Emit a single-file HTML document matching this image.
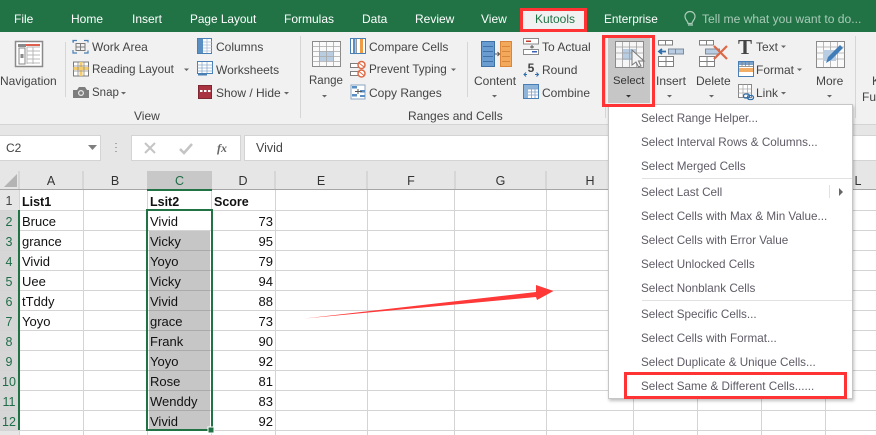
<!DOCTYPE html>
<html><head><meta charset="utf-8"><style>
html,body{margin:0;padding:0;background:#fff}
#p{position:relative;width:876px;height:435px;overflow:hidden;font-family:"Liberation Sans",sans-serif;background:#fff}
.b{position:absolute}
.t{position:absolute;white-space:nowrap;font-size:12px;line-height:16px;height:16px;color:#444}
.w{color:#fff;top:11px}
.m{color:#5f5b66;left:641px;font-size:11.7px}
.k{color:#111;font-size:13px}
.kb{font-weight:bold;color:#111;font-size:12.5px}
.n{text-align:right;width:40px;left:233px;color:#111;font-size:13px}
.r{left:0;width:18px;text-align:center;color:#1f6d48;font-size:12.5px}
.h{top:173px;color:#333;text-align:center;font-size:12.5px}
svg{position:absolute;left:0;top:0}
</style></head><body><div id="p">
<div class="b" style="left:0;top:0;width:876px;height:32px;background:#217346"></div>
<div class="b" style="left:0;top:32px;width:876px;height:92px;background:#f1f1f1"></div>
<div class="b" style="left:0;top:124px;width:876px;height:1px;background:#d4d4d4"></div>
<div class="b" style="left:0;top:125px;width:876px;height:46px;background:#e6e6e6"></div>
<div class="b" style="left:0;top:135px;width:100px;height:24px;background:#fff;border:1px solid #d4d4d4;border-left:0"></div>
<div class="b" style="left:131px;top:135px;width:108px;height:24px;background:#fff;border:1px solid #d4d4d4"></div>
<div class="b" style="left:244px;top:135px;width:640px;height:24px;background:#fff;border:1px solid #d4d4d4"></div>

<svg width="876" height="435" viewBox="0 0 876 435">
<rect x="0" y="171" width="876" height="19" fill="#e6e6e6"/>
<rect x="0" y="190" width="19" height="245" fill="#e6e6e6"/>
<rect x="0" y="210" width="19" height="220" fill="#d6d6d6"/>
<rect x="147" y="171" width="65" height="19" fill="#c8c8c8"/>
<path d="M19 171V190M83 171V190M211 171V190M275 171V190M367 171V190M455 171V190M546 171V190M634 171V190" stroke="#c6c6c6"/>
<path d="M0 189.5H876" stroke="#a6a6a6"/>
<path d="M4 187 L17 174 V187Z" fill="#b4b4b4"/>
<g stroke="#d4d4d4" fill="none">
<path d="M19.5 190V435M83.5 190V435M147.5 190V435M211.5 190V435M275.5 190V435M367.5 190V435M454.5 190V435M546.5 190V435M633.5 190V435M697.5 190V435M761.5 190V435M825.5 190V435"/>
<path d="M0 210.5H876M0 230.5H876M0 250.5H876M0 270.5H876M0 290.5H876M0 310.5H876M0 330.5H876M0 350.5H876M0 370.5H876M0 390.5H876M0 410.5H876M0 430.5H876"/>
</g>
<rect x="149" y="231" width="61" height="198" fill="#c6c6c6"/>
<path d="M149 250.5H210M149 270.5H210M149 290.5H210M149 310.5H210M149 330.5H210M149 350.5H210M149 370.5H210M149 390.5H210M149 410.5H210" stroke="#ababab"/>
<rect x="147" y="210" width="65" height="220" fill="none" stroke="#217346" stroke-width="2"/>
<rect x="18" y="210" width="2" height="220" fill="#217346"/>
<rect x="147" y="189" width="65" height="2" fill="#217346"/>
<rect x="208" y="427" width="6" height="6" fill="#217346" stroke="#fff"/>
<!-- arrow -->
<path d="M304.5 318.500 L536 292 L536 285 L553.500 291 L537 300 L536 297Z" fill="#ff3838"/>
<!-- formula bar icons -->
<path d="M88 145h9l-4.500 5z" fill="#7f7f7f"/>
<path d="M116 143v1M116 147v1M116 151v1" stroke="#a8a8a8" stroke-width="2"/>
<path d="M145 143l10 10M155 143l-10 10" stroke="#c4c4c4" stroke-width="2"/>
<path d="M180 149l4 4 8-9" stroke="#c4c4c4" stroke-width="2.500" fill="none"/>
<!-- Ribbon separators -->
<path d="M65.500 42V97M300.500 36V118M467.500 42V97M605.500 36V118M855.500 36V118" stroke="#d6d6d6"/>
<!-- Navigation -->
<rect x="15.500" y="41.500" width="27" height="25" fill="#fff" stroke="#8a8a8a" stroke-width="1.500"/>
<rect x="18" y="44" width="8" height="3" fill="#8a8a8a"/>
<rect x="26" y="44" width="14" height="2" fill="#e06050"/>
<path d="M27 47H40M27 51H40M27 55H40M27 59H40M27 63H40M33 47V64M27 47V64" stroke="#b8b8b8"/>
<rect x="19" y="48" width="6" height="16" fill="#fff" stroke="#8a8a8a"/>
<rect x="20.500" y="54" width="3" height="4" fill="#8a8a8a"/>
<!-- Work area -->
<path d="M74 42h-1v-1.500h4M84 40.500h4v2M73 50v3h4M84 53h4v-2.500" stroke="#4a7fb5" fill="none" stroke-width="1.200"/>
<rect x="76" y="43.500" width="9" height="7" fill="none" stroke="#7a7a7a"/>
<path d="M76 47H85M80.500 43.500V50.500" stroke="#7a7a7a"/>
<!-- Reading Layout -->
<rect x="73.500" y="62" width="15" height="14" fill="#fff" stroke="#7a7a7a"/>
<path d="M73.500 68.500H88.500M81 62V76" stroke="#f4cc6c" stroke-width="3"/>
<path d="M78 62V76M84 62V76M73.500 66H88.500M73.500 71H88.500" stroke="#8a8a8a" stroke-width=".8"/>
<!-- Snap camera -->
<path d="M73 90h4l2-3h6l2 3h2v8H73z" fill="#7d7d7d"/>
<circle cx="81" cy="93" r="3" fill="#e8e8e8"/><circle cx="81" cy="93" r="1.800" fill="#7d7d7d"/>
<!-- Columns -->
<rect x="197.500" y="38.500" width="14" height="15" fill="#fff" stroke="#4a7fb5"/>
<rect x="198" y="39" width="5" height="14" fill="#5a8fc4"/>
<path d="M207 39V53M203 42H212M203 45H212M203 48H212M203 51H212" stroke="#a9bfd6" stroke-width=".8"/>
<!-- Worksheets -->
<rect x="197.500" y="61.500" width="15" height="12" fill="#fff" stroke="#4a7fb5"/>
<path d="M197.500 65H212.500M197.500 68H212.500M197.500 71H212.500M202 62V73M207 62V73" stroke="#8eaccb" stroke-width=".8"/>
<rect x="198" y="73.500" width="9" height="2" fill="#4a7fb5"/>
<!-- Show hide -->
<rect x="198.500" y="85.500" width="13" height="13" fill="#a93340" stroke="#7e2731"/>
<rect x="200" y="90" width="2.500" height="2" fill="#fff"/><rect x="204" y="90" width="2.500" height="2" fill="#fff"/><rect x="208" y="90" width="2.500" height="2" fill="#fff"/>
<!-- Range -->
<rect x="312.500" y="41.500" width="28" height="25" fill="#fafafa" stroke="#8a8a8a"/>
<rect x="319" y="51" width="15" height="10" fill="#b9cde2"/>
<path d="M312.500 46.500H340.500M312.500 51.500H340.500M312.500 56.500H340.500M312.500 61.500H340.500M319.500 42V66M326.500 42V66M333.500 42V66" stroke="#a8a8a8" stroke-width=".8"/>
<!-- Compare cells -->
<rect x="350.500" y="38.500" width="15" height="15" fill="#fff" stroke="#4a7fb5"/>
<rect x="353" y="39" width="2.500" height="14" fill="#5a8fc4"/><rect x="360" y="39" width="3" height="14" fill="#ef9d45"/>
<path d="M356.500 39V53" stroke="#9a9a9a"/>
<!-- Prevent typing -->
<rect x="350.500" y="63.500" width="9" height="4" fill="#fff" stroke="#7f7f7f"/>
<rect x="350.500" y="71.500" width="9" height="4" fill="#fff" stroke="#7f7f7f"/>
<circle cx="361.500" cy="65" r="3.500" fill="#fff" stroke="#de6a45" stroke-width="1.500"/>
<circle cx="361.500" cy="73.500" r="3.500" fill="#fff" stroke="#de6a45" stroke-width="1.500"/>
<path d="M359 63l5 4M359 71.500l5 4" stroke="#de6a45"/>
<!-- Copy Ranges -->
<rect x="351" y="85" width="14" height="14" fill="#fff" stroke="#8aa5c2"/>
<rect x="352" y="86" width="5" height="2.500" fill="#5a8fc4"/><rect x="360" y="90" width="5" height="2.500" fill="#5a8fc4"/>
<rect x="352" y="94" width="5" height="2.500" fill="#5a8fc4"/><rect x="360" y="95" width="5" height="2" fill="#5a8fc4"/>
<path d="M355 91.500H362M358 89v5" stroke="#555"/>
<!-- Content -->
<rect x="481.500" y="41.500" width="13" height="25" fill="#6a9bd1" stroke="#3f70a6"/>
<path d="M483 46.500H493M483 51.500H493M483 56.500H493M483 61.500H493" stroke="#3f70a6"/>
<rect x="500.500" y="41.500" width="11" height="25" fill="#f3a95b" stroke="#d9853a"/>
<path d="M502 46.500H510M502 51.500H510M502 56.500H510M502 61.500H510" stroke="#d9853a"/>
<path d="M495 54H499M497.500 52l2 2-2 2" stroke="#555" fill="none"/>
<!-- To Actual -->
<rect x="523.500" y="38.500" width="15" height="5.500" fill="#fff" stroke="#8a8a8a"/><rect x="526" y="40.500" width="5" height="1.500" fill="#c0392b"/>
<rect x="523.500" y="49.500" width="15" height="5" fill="#fff" stroke="#8a8a8a"/><rect x="532" y="51" width="5" height="1.500" fill="#3a5fb5"/>
<path d="M532 45v3.500M530 47h4" stroke="#555"/>
<!-- Round -->
<text x="531" y="72" font-size="12" font-weight="bold" fill="#444" font-family="Liberation Sans" text-anchor="middle">5</text>
<path d="M524 74.500h3M535 74.500h3.500M526 72.500l-2 2 2 2M536.500 72.500l2 2-2 2" stroke="#2f6ea8" fill="none"/>
<!-- Combine -->
<rect x="523.500" y="84.500" width="15" height="14" fill="#fff" stroke="#4a7fb5"/>
<rect x="524" y="85" width="14" height="4" fill="#8fb4da"/><rect x="524" y="85" width="4" height="13" fill="#8fb4da"/>
<path d="M528 89H538M528 92H538M528 95H538M531.500 89V98M535 89V98" stroke="#7e9fc4" stroke-width=".8"/>
<!-- Select button -->
<rect x="608" y="37" width="42" height="66" fill="#c6c6c6"/>
<rect x="615.500" y="41.500" width="28" height="26" fill="#f6f6f6" stroke="#8a8a8a"/>
<rect x="622" y="49" width="14" height="11" fill="#b9cde2"/>
<path d="M615.500 47H643.500M615.500 53H643.500M615.500 59H643.500M622.500 42V67M629.500 42V67M636.500 42V67" stroke="#a0a0a0" stroke-width=".8"/>
<path d="M632 50 L632 65 L636 62 L638.500 67 L641 66 L638.500 61 L644 61Z" fill="#f4f4f4" stroke="#777"/>
<!-- Insert -->
<path d="M658.500 40.500h7v4.500h-7zM665.500 40.500h7v4.500h-7z" fill="#fff" stroke="#808080"/>
<path d="M668.500 49h7v5h-7zM675.500 49h8v5h-8z" fill="#b9cde2" stroke="#7d8c9c"/>
<path d="M658.500 56.500h15v10h-15zM666 56.500v10M658.500 61.500h15" fill="#fff" stroke="#808080"/>
<path d="M659 51.500h7M662 49l-3 2.500 3 2.500" stroke="#2f6ea8" stroke-width="1.800" fill="none"/>
<!-- Delete -->
<path d="M699.500 40.500h7v4.500h-7zM706.500 40.500h7v4.500h-7z" fill="#fff" stroke="#808080"/>
<rect x="705.500" y="49" width="14" height="5" fill="#b9cde2" stroke="#7d8c9c"/>
<path d="M699.500 56.500h15v10h-15zM707 56.500v10M699.500 61.500h15" fill="#fff" stroke="#808080"/>
<path d="M714 46l13 13M727 46l-13 13" stroke="#dc6848" stroke-width="2.200"/>
<!-- T -->
<text x="738" y="54" font-size="21" font-weight="bold" fill="#444" font-family="Liberation Serif">T</text>
<!-- Format -->
<rect x="738.500" y="61.500" width="15" height="15" fill="#fff" stroke="#4a7fb5"/>
<rect x="739" y="62" width="14" height="3" fill="#7da3cd"/><rect x="739" y="68" width="14" height="4" fill="#f2ae67"/>
<path d="M739 66.500H753M742 62V66M745.500 62V66M749 62V66" stroke="#777" stroke-width=".7"/>
<!-- Link -->
<rect x="738.500" y="84.500" width="13" height="13" fill="#fff" stroke="#888"/>
<path d="M738.500 89H751.500M738.500 93H751.500M743 84.500V97.500M747.500 84.500V97.500" stroke="#aaa" stroke-width=".8"/>
<rect x="743.500" y="94" width="6" height="4" rx="2" fill="none" stroke="#2f6ea8" stroke-width="1.300"/>
<rect x="747.500" y="95.500" width="6" height="4" rx="2" fill="none" stroke="#2f6ea8" stroke-width="1.300"/>
<!-- More -->
<rect x="816.500" y="41.500" width="28" height="26" fill="#fafafa" stroke="#8a8a8a"/>
<path d="M816.500 47H844.500M816.500 53H844.500M816.500 59H844.500M823.500 42V67M830.500 42V67M837.500 42V67" stroke="#a8a8a8" stroke-width=".8"/>
<rect x="823" y="50" width="13" height="11" fill="#b9cde2"/>
<path d="M826 63 L828 57 L840 45 L843 48 L831 60Z" fill="#3f7cb8"/>
<!-- drop arrows -->
<g fill="#666">
<path d="M184 68.500h5l-2.500 2.500zM121 92h5l-2.500 2.500zM284 92h5l-2.500 2.500zM451 68.500h5l-2.500 2.500zM322 95h5l-2.500 2.500zM492 95h5l-2.500 2.500zM781 45.500h5l-2.500 2.500zM797 68.500h5l-2.500 2.500zM781 92h5l-2.500 2.500zM667 95h5l-2.500 2.500zM709 95h5l-2.500 2.500zM827 95h5l-2.500 2.500z"/>
<path d="M626 95h5l-2.500 2.500z" fill="#333"/>
</g>
<!-- lightbulb -->
<path d="M688 26h5M688 24.500c0-2.500-3-3.500-3-7a5 5 0 0 1 10 0c0 3.500-3 4.500-3 7z" transform="translate(0 -1)" fill="none" stroke="#a9cbb7" stroke-width="1.200"/>
</svg>

<!-- tabs -->
<div class="b" style="left:523px;top:10px;width:61px;height:22px;background:#f1f1f1"></div>
<span class="t w" style="left:14px">File</span>
<span class="t w" style="left:71px">Home</span>
<span class="t w" style="left:132px">Insert</span>
<span class="t w" style="left:190px;font-size:11.8px">Page Layout</span>
<span class="t w" style="left:284px">Formulas</span>
<span class="t w" style="left:362px">Data</span>
<span class="t w" style="left:415px">Review</span>
<span class="t w" style="left:481px">View</span>
<span class="t" style="left:535px;top:11px;color:#217346">Kutools</span>
<span class="t w" style="left:604px;font-size:11.8px">Enterprise</span>
<span class="t" style="left:702px;top:11px;color:#a9cbb7;font-size:12.1px">Tell me what you want to do...</span>

<!-- ribbon text -->
<span class="t" style="left:0;top:73px">Navigation</span>
<span class="t" style="left:92px;top:39px">Work Area</span>
<span class="t" style="left:92px;top:62px;font-size:11.7px">Reading Layout</span>
<span class="t" style="left:92px;top:85px;font-size:11.5px">Snap</span>
<span class="t" style="left:216px;top:39px">Columns</span>
<span class="t" style="left:216px;top:62px">Worksheets</span>
<span class="t" style="left:216px;top:85px">Show / Hide</span>
<span class="t" style="left:134px;top:108px">View</span>
<span class="t" style="left:309px;top:73px;font-size:11.5px">Range</span>
<span class="t" style="left:369px;top:39px">Compare Cells</span>
<span class="t" style="left:369px;top:62px;font-size:11.7px">Prevent Typing</span>
<span class="t" style="left:369px;top:85px">Copy Ranges</span>
<span class="t" style="left:408px;top:108px">Ranges and Cells</span>
<span class="t" style="left:474px;top:73px">Content</span>
<span class="t" style="left:542px;top:39px">To Actual</span>
<span class="t" style="left:542px;top:62px">Round</span>
<span class="t" style="left:542px;top:85px">Combine</span>
<span class="t" style="left:613px;top:73px;color:#333;font-size:11.3px">Select</span>
<span class="t" style="left:656px;top:73px">Insert</span>
<span class="t" style="left:696px;top:73px">Delete</span>
<span class="t" style="left:756px;top:39px">Text</span>
<span class="t" style="left:756px;top:62px">Format</span>
<span class="t" style="left:756px;top:85px">Link</span>
<span class="t" style="left:816px;top:73px">More</span>
<span class="t" style="left:872px;top:73px">K</span>
<span class="t" style="left:862px;top:89px">Fu</span>

<!-- formula bar -->
<span class="t" style="left:6px;top:140px;color:#444">C2</span>
<span class="t" style="left:217px;top:140px;font-family:'Liberation Serif',serif;font-style:italic;font-weight:bold;color:#666">fx</span>
<span class="t" style="left:256px;top:140px;color:#444;font-size:12.5px">Vivid</span>

<!-- headers -->
<span class="t h" style="left:19px;width:64px">A</span>
<span class="t h" style="left:83px;width:64px">B</span>
<span class="t h" style="left:147px;width:65px;color:#1f6d48">C</span>
<span class="t h" style="left:211px;width:64px">D</span>
<span class="t h" style="left:275px;width:92px">E</span>
<span class="t h" style="left:367px;width:88px">F</span>
<span class="t h" style="left:455px;width:91px">G</span>
<span class="t h" style="left:546px;width:88px">H</span>
<span class="t h" style="left:852px;width:12px">L</span>
<span class="t r" style="top:193px;color:#444">1</span>
<span class="t r" style="top:214px">2</span>
<span class="t r" style="top:234px">3</span>
<span class="t r" style="top:254px">4</span>
<span class="t r" style="top:274px">5</span>
<span class="t r" style="top:294px">6</span>
<span class="t r" style="top:314px">7</span>
<span class="t r" style="top:334px">8</span>
<span class="t r" style="top:354px">9</span>
<span class="t r" style="top:374px">10</span>
<span class="t r" style="top:394px">11</span>
<span class="t r" style="top:414px">12</span>

<!-- cells -->
<span class="t kb" style="left:22px;top:194px">List1</span>
<span class="t kb" style="left:150px;top:194px">Lsit2</span>
<span class="t kb" style="left:214px;top:194px">Score</span>
<span class="t k" style="left:22px;top:214px">Bruce</span>
<span class="t k" style="left:22px;top:234px">grance</span>
<span class="t k" style="left:22px;top:254px">Vivid</span>
<span class="t k" style="left:22px;top:274px">Uee</span>
<span class="t k" style="left:22px;top:294px">tTddy</span>
<span class="t k" style="left:22px;top:314px">Yoyo</span>
<span class="t k" style="left:150px;top:214px">Vivid</span>
<span class="t k" style="left:150px;top:234px">Vicky</span>
<span class="t k" style="left:150px;top:254px">Yoyo</span>
<span class="t k" style="left:150px;top:274px">Vicky</span>
<span class="t k" style="left:150px;top:294px">Vivid</span>
<span class="t k" style="left:150px;top:314px">grace</span>
<span class="t k" style="left:150px;top:334px">Frank</span>
<span class="t k" style="left:150px;top:354px">Yoyo</span>
<span class="t k" style="left:150px;top:374px">Rose</span>
<span class="t k" style="left:150px;top:394px">Wenddy</span>
<span class="t k" style="left:150px;top:414px">Vivid</span>
<span class="t n" style="top:214px">73</span>
<span class="t n" style="top:234px">95</span>
<span class="t n" style="top:254px">79</span>
<span class="t n" style="top:274px">94</span>
<span class="t n" style="top:294px">88</span>
<span class="t n" style="top:314px">73</span>
<span class="t n" style="top:334px">90</span>
<span class="t n" style="top:354px">92</span>
<span class="t n" style="top:374px">81</span>
<span class="t n" style="top:394px">83</span>
<span class="t n" style="top:414px">92</span>

<!-- menu -->
<div class="b" style="left:608px;top:104px;width:243px;height:293px;background:#fff;border:1px solid #c6c6c6;box-shadow:1px 2px 3px rgba(0,0,0,.25)"></div>
<div class="b" style="left:642px;top:178px;width:210px;height:1px;background:#e1e1e1"></div>
<div class="b" style="left:642px;top:300px;width:210px;height:1px;background:#e1e1e1"></div>
<div class="b" style="left:829px;top:185px;width:1px;height:13px;background:#e1e1e1"></div>
<div class="b" style="left:839px;top:188px;width:0;height:0;border-left:4px solid #666;border-top:4px solid transparent;border-bottom:4px solid transparent"></div>
<span class="t m" style="top:111px">Select Range Helper...</span>
<span class="t m" style="top:135px">Select Interval Rows &amp; Columns...</span>
<span class="t m" style="top:159px">Select Merged Cells</span>
<span class="t m" style="top:185px">Select Last Cell</span>
<span class="t m" style="top:209px">Select Cells with Max &amp; Min Value...</span>
<span class="t m" style="top:233px">Select Cells with Error Value</span>
<span class="t m" style="top:257px">Select Unlocked Cells</span>
<span class="t m" style="top:281px">Select Nonblank Cells</span>
<span class="t m" style="top:307px">Select Specific Cells...</span>
<span class="t m" style="top:331px">Select Cells with Format...</span>
<span class="t m" style="top:355px">Select Duplicate &amp; Unique Cells...</span>
<span class="t m" style="top:379px">Select Same &amp; Different Cells......</span>

<!-- red boxes -->
<div class="b" style="left:520px;top:8px;width:61px;height:18px;border:3px solid #ff3333"></div>
<div class="b" style="left:602px;top:35px;width:47px;height:66px;border:3px solid #ff3333"></div>
<div class="b" style="left:624px;top:372px;width:217px;height:21px;border:3px solid #ff3333"></div>
</div></body></html>
